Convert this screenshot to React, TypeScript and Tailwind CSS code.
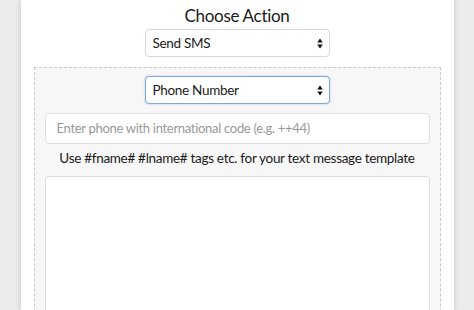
import type React from 'react';

function SelectArrows() {
    return (
        <svg width="6" height="11" viewBox="0 0 6 11" className="shrink-0">
            <path d="M3 0.5 L5.8 4.5 L0.2 4.5 Z" fill="#111" />
            <path d="M3 10.5 L5.8 6.5 L0.2 6.5 Z" fill="#111" />
        </svg>
    );
}

function FakeSelect({ label, focused = false }: { label: string; focused?: boolean }) {
    const border = focused
        ? 'border-[#7fa9d9] shadow-[0_0_2px_rgba(102,150,220,0.6)]'
        : 'border-[#d6d6d6]';
    return (
        <div
            className={`mx-auto flex h-[28px] w-[185px] items-center justify-between rounded-[4px] border bg-white pl-[7px] pr-[6px] text-[13.5px] tracking-[-0.3px] text-[#1a1a1a] ${border}`}
        >
            <span>{label}</span>
            <SelectArrows />
        </div>
    );
}

export default function App() {
    const font: React.CSSProperties = { fontFamily: 'Lato, "Open Sans", sans-serif' };

    return (
        <div className="flex h-[310px] justify-center overflow-hidden bg-[#ececec]" style={font}>
            <div className="w-[433px] bg-white px-[13px] pt-[4px] shadow-[0_0_6px_rgba(0,0,0,0.18)]">
                <h2 className="text-center text-[17px] leading-[24px] tracking-[-0.3px] text-[#1a1a1a]">Choose Action</h2>
                <div className="mt-[1px]">
                    <FakeSelect label="Send SMS" />
                </div>

                {/* sms settings block */}
                <div className="mt-[10px] h-[300px] border border-dashed border-[#c8c8c8] bg-[#f7f7f7] pl-[10px] pr-[10px] pt-[8px]">
                    <FakeSelect label="Phone Number" focused />
                    <div className="mt-[9px] flex h-[31px] items-center rounded-[4px] border border-[#e0e0e0] bg-white pl-[11px] text-[13px] tracking-[-0.3px] text-[#999]">
                        Enter phone with international code (e.g. ++44)
                    </div>
                    <p className="mt-[4px] whitespace-nowrap text-center text-[13.5px] leading-[20px] tracking-[-0.3px] text-[#1a1a1a]">
                        Use #fname# #lname# tags etc. for your text message template
                    </p>
                    <div className="mt-[8px] h-[200px] rounded-[3px] border border-[#e0e0e0] bg-white" />
                </div>
            </div>
        </div>
    );
}
